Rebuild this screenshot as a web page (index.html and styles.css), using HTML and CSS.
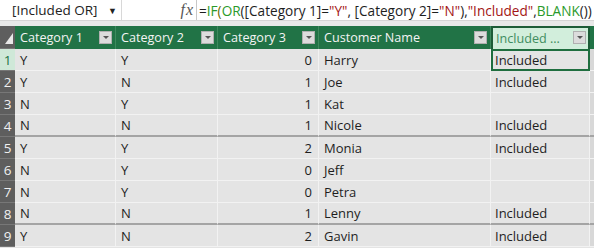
FILE: index.html
```html
<!DOCTYPE html>
<html>
<head>
<meta charset="utf-8">
<link rel="stylesheet" href="styles.css">
</head>
<body>
<div class="app">
  <div class="fbar">
    <div class="namebox"><span class="nb-text">[Included OR]</span><span class="nb-arrow">&#9660;</span></div>
    <div class="fx"><i>f</i><i class="x">x</i></div>
    <div class="formula">=<span class="fn">IF</span><span class="pn">(</span><span class="fn">OR</span>([Category 1]=<span class="str">"Y"</span>, [Category 2]=<span class="str">"N"</span>),<span class="str">"Included"</span>,<span class="fn">BLANK</span>())</div>
  </div>
  <div class="gap"></div>
  <div class="grid">
    <div class="row head">
      <div class="rn corner"><svg width="8" height="11" viewBox="0 0 8 11"><polygon points="8,0 8,11 0,11" fill="#e8e8e8"/></svg></div>
      <div class="hc">Category 1<span class="dd"></span></div>
      <div class="hc">Category 2<span class="dd"></span></div>
      <div class="hc">Category 3<span class="dd"></span></div>
      <div class="hc">Customer Name<span class="dd"></span></div>
      <div class="hc sel">Included ...<span class="dd"></span></div>
      <div class="hc rest"></div>
    </div>
    <div class="row"><div class="rn cur">1</div><div class="c">Y</div><div class="c">Y</div><div class="c num">0</div><div class="c">Harry</div><div class="c inc active">Included</div><div class="c rest"></div></div>
    <div class="row"><div class="rn">2</div><div class="c">Y</div><div class="c">N</div><div class="c num">1</div><div class="c">Joe</div><div class="c inc">Included</div><div class="c rest"></div></div>
    <div class="row"><div class="rn">3</div><div class="c">N</div><div class="c">Y</div><div class="c num">1</div><div class="c">Kat</div><div class="c inc"></div><div class="c rest"></div></div>
    <div class="row brk"><div class="rn">4</div><div class="c">N</div><div class="c">N</div><div class="c num">1</div><div class="c">Nicole</div><div class="c inc">Included</div><div class="c rest"></div></div>
    <div class="row"><div class="rn">5</div><div class="c">Y</div><div class="c">Y</div><div class="c num">2</div><div class="c">Monia</div><div class="c inc">Included</div><div class="c rest"></div></div>
    <div class="row"><div class="rn">6</div><div class="c">N</div><div class="c">Y</div><div class="c num">0</div><div class="c">Jeff</div><div class="c inc"></div><div class="c rest"></div></div>
    <div class="row"><div class="rn">7</div><div class="c">N</div><div class="c">Y</div><div class="c num">0</div><div class="c">Petra</div><div class="c inc"></div><div class="c rest"></div></div>
    <div class="row brk"><div class="rn">8</div><div class="c">N</div><div class="c">N</div><div class="c num">1</div><div class="c">Lenny</div><div class="c inc">Included</div><div class="c rest"></div></div>
    <div class="row"><div class="rn">9</div><div class="c">Y</div><div class="c">N</div><div class="c num">2</div><div class="c">Gavin</div><div class="c inc">Included</div><div class="c rest"></div></div>
  </div>
</div>
</body>
</html>
```
FILE: styles.css
```css
html, body { margin: 0; padding: 0; }
body {
  width: 594px; height: 248px; overflow: hidden;
  background: #e4e4e4;
  font-family: "Segoe UI", "Open Sans", "Noto Sans", sans-serif;
  font-size: 13px;
  color: #1e1e1e;
}
.app { display: flex; flex-direction: column; }
.fbar {
  height: 21px; background: #fff;
  display: flex; align-items: stretch;
  border-bottom: 1px solid #d4d4d4;
  box-sizing: border-box;
}
.namebox {
  width: 122px; display: flex; align-items: center;
  padding-left: 12px; box-sizing: border-box;
  border-right: 1px solid #d8d8d8;
  font-size: 13.5px; color: #222;
}
.nb-text { flex: 1; }
.nb-arrow { font-size: 9px; margin-right: 4px; color: #222; }
.fx {
  width: 75px; display: flex; align-items: center; justify-content: flex-end;
  padding-right: 3px; box-sizing: border-box;
  border-right: 1px solid #c8c8c8;
  font-family: "Liberation Serif", serif; font-size: 16px; color: #555;
}
.fx .x { margin-left: 1px; }
.formula {
  flex: 1; display: flex; align-items: center; padding-left: 2px;
  white-space: nowrap; overflow: hidden; color: #1e1e1e; font-size: 13.6px;
}
.fn { color: #2a9a2a; }
.pn { color: #6a6a00; }
.str { color: #a31515; }
.gap { height: 5px; background: #e8e8e8; }
.grid { display: flex; flex-direction: column; }
.row {
  display: grid;
  grid-template-columns: 15px 101px 102px 101px 172px 99px 4px;
  height: 22px;
}
.row > div { box-sizing: border-box; display: flex; align-items: center; white-space: nowrap; }
.rn {
  background: #5e5e5e; color: #f0f0f0; justify-content: center;
  border-bottom: 1px solid #777; font-size: 13.5px;
}
.rn.cur { background: #cfe8d8; color: #217346; }
.corner { justify-content: flex-end; align-items: flex-end !important; padding: 0 2px 4px 0; }
.head { height: 23px; }
.hc {
  background: #217346; color: #f4f4f4; padding-left: 5px;
  position: relative; font-size: 12.6px;
  border-right: 1px solid #3e8a5e;
}
.hc.sel { background: #d2eedc; color: #3f8d60; border: 2px solid #1d5c37; border-bottom: none; padding-left: 3px; }
.hc.rest { background: #217346; border-right: none; }
.dd {
  position: absolute; right: 3px; top: 5px;
  width: 13px; height: 13px; box-sizing: border-box;
  background: #dcdcdc; border: 1px solid #b0b0b0;
}
.hc.sel .dd { right: 2px; top: 3px; }
.dd::after {
  content: ""; position: absolute; left: 3px; top: 4px;
  border-left: 3px solid transparent; border-right: 3px solid transparent;
  border-top: 3px solid #555;
}
.c {
  background: #e4e4e4; padding-left: 5px;
  border-right: 1px solid #f2f2f2; border-bottom: 1px solid #f2f2f2;
}
.c.num { justify-content: flex-end; padding-right: 6px; padding-left: 0; }
.c.inc { padding-left: 4px; }
.c.active { border: 2px solid #1f6e3f; padding-left: 2px; }
.c.rest { background: #d8d8d8; border-right: none; padding: 0; }
.row.brk > .c { border-bottom: 2px solid #a4a4a4; }
```
